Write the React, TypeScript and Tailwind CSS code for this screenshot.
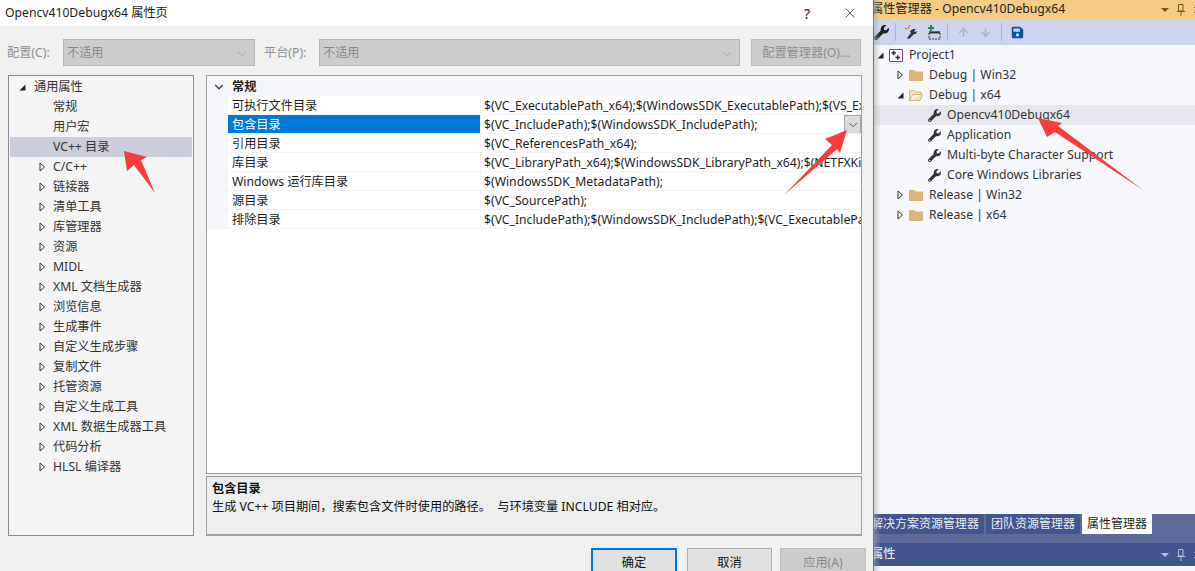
import { FaWrench, FaSave } from 'react-icons/fa';
import { ArrowUp, ArrowDown, ChevronDown, X } from 'lucide-react';

const FONT = 'font-["Noto_Sans","Noto_Sans_CJK_SC",sans-serif]';

const NAV = [
  { label: '常规', indent: true },
  { label: '用户宏', indent: true },
  { label: 'VC++ 目录', indent: true, selected: true },
  { label: 'C/C++' },
  { label: '链接器' },
  { label: '清单工具' },
  { label: '库管理器' },
  { label: '资源' },
  { label: 'MIDL' },
  { label: 'XML 文档生成器' },
  { label: '浏览信息' },
  { label: '生成事件' },
  { label: '自定义生成步骤' },
  { label: '复制文件' },
  { label: '托管资源' },
  { label: '自定义生成工具' },
  { label: 'XML 数据生成器工具' },
  { label: '代码分析' },
  { label: 'HLSL 编译器' },
];

const ROWS = [
  { name: '可执行文件目录', value: '$(VC_ExecutablePath_x64);$(WindowsSDK_ExecutablePath);$(VS_ExecutablePath);' },
  { name: '包含目录', value: '$(VC_IncludePath);$(WindowsSDK_IncludePath);', active: true },
  { name: '引用目录', value: '$(VC_ReferencesPath_x64);' },
  { name: '库目录', value: '$(VC_LibraryPath_x64);$(WindowsSDK_LibraryPath_x64);$(NETFXKitsDir)Lib\\um\\x64' },
  { name: 'Windows 运行库目录', value: '$(WindowsSDK_MetadataPath);' },
  { name: '源目录', value: '$(VC_SourcePath);' },
  { name: '排除目录', value: '$(VC_IncludePath);$(WindowsSDK_IncludePath);$(VC_ExecutablePath_x64);$(VC_LibraryPath_x64)' },
];

function Collapsed() {
  return (
    <svg width="7" height="10" viewBox="0 0 7 10" className="shrink-0">
      <path d="M1 1 L5.5 5 L1 9 Z" fill="#fff" stroke="#333" strokeWidth="1" />
    </svg>
  );
}

function Expanded() {
  return (
    <svg width="7" height="7" viewBox="0 0 7 7" className="shrink-0">
      <path d="M6.5 0.5 V6.5 H0.5 Z" fill="#222" />
    </svg>
  );
}

function Folder({ open }: { open?: boolean }) {
  if (open) {
    return (
      <svg width="14" height="12" viewBox="0 0 14 12" className="shrink-0">
        <path d="M0.5 11.5 V1.5 H5 L6.5 3 H12 V5.5 H4 L0.5 11.5 H11 L13.5 5.5 H12" fill="#f1e3c9" stroke="#dcb67a" strokeWidth="1" />
      </svg>
    );
  }
  return (
    <svg width="14" height="12" viewBox="0 0 14 12" className="shrink-0">
      <path d="M0 1 H5.5 L7 2.5 H14 V12 H0 Z" fill="#dcb67a" />
    </svg>
  );
}

function PaneButtons({ color }: { color: string }) {
  return (
    <div className="-mr-[6px] flex shrink-0 items-center gap-[8px]">
      <svg width="8" height="4" viewBox="0 0 8 4"><path d="M0 0 H8 L4 4 Z" fill={color} /></svg>
      <svg width="8" height="12" viewBox="0 0 8 12"><path d="M1.5 .5 H6 V7 H1.5 Z M0 7.5 H8 M4 8 V12" fill="none" stroke={color} /></svg>
      <svg width="8" height="8" viewBox="0 0 8 8"><path d="M1 1 L7 7 M7 1 L1 7" stroke={color} /></svg>
    </div>
  );
}

function ConfigSelect({ width }: { width: string }) {
  return (
    <div className={`flex h-[27px] items-center justify-between border border-[#b5b5b5] bg-[#cccccc] pl-[3px] pr-[5px] pt-[2px] text-[#8a8a8a] ${width}`}>
      <span>不适用</span>
      <ChevronDown size={14} strokeWidth={1.2} className="text-[#9a9a9a]" />
    </div>
  );
}

function Dialog() {
  return (
    <div className="flex h-full w-[873px] shrink-0 flex-col bg-[#f0f0f0]">
      <div className="flex h-[26px] shrink-0 items-center justify-between bg-white pl-[5px] pr-[15px] text-[#1a1a1a]">
        <span>Opencv410Debugx64 属性页</span>
        <div className="flex items-center gap-[32px]">
          <span className="text-[14px]">?</span>
          <X size={16} strokeWidth={1.1} />
        </div>
      </div>

      <div className="flex h-[49px] shrink-0 items-center pl-[7px] pr-[12px] pt-[4px] text-[#8f8f8f]">
        <span className="w-[56px] pt-[2px]">配置(C):</span>
        <ConfigSelect width="w-[192px]" />
        <span className="ml-[9px] w-[55px] pt-[2px]">平台(P):</span>
        <ConfigSelect width="w-[421px]" />
        <div className="ml-[11px] flex h-[27px] flex-1 items-center justify-center border border-[#bdbdbd] bg-[#cccccc] pt-[2px]">
          配置管理器(O)...
        </div>
      </div>

      <div className="flex h-[461px] shrink-0 gap-[12px] pl-[8px] pr-[11px]">
        <div className="flex w-[186px] shrink-0 flex-col border border-[#8a8a94] bg-[#f5f5f5] px-px pt-px text-[#333]">
          <div className="flex h-[20px] items-center gap-[6px] pl-[9px]">
            <Expanded />
            <span className="ml-[2px]">通用属性</span>
          </div>
          {NAV.map((n) => (
            <div
              key={n.label}
              className={`flex h-[20px] shrink-0 items-center pl-[29px] ${n.selected ? 'bg-[#cbcdda]' : ''}`}
            >
              {n.indent ? <span className="w-[7px]" /> : <Collapsed />}
              <span className="ml-[7px]">{n.label}</span>
            </div>
          ))}
        </div>

        <div className="flex min-w-0 flex-1 flex-col gap-[2px]">
          <div className="flex h-[399px] shrink-0 flex-col border border-[#a0a0a0] bg-white text-[#1e1e1e]">
            <div className="flex h-[20px] shrink-0 items-center bg-[#f5f6fa] pl-[5px] pt-[2px]">
              <ChevronDown size={14} strokeWidth={2.2} className="text-[#444]" />
              <span className="ml-[6px] font-bold">常规</span>
            </div>
            {ROWS.map((r) => (
              <div key={r.name} className="flex h-[19px] shrink-0">
                <div className="w-[21px] shrink-0 bg-[#f5f6fa]" />
                <div className={`w-[252px] shrink-0 border-b border-[#f4f4f6] pl-[4px] leading-[20px] ${r.active ? 'bg-[#0078d7] text-white' : ''}`}>
                  {r.name}
                </div>
                <div className="relative min-w-0 flex-1 overflow-hidden whitespace-nowrap border-b border-l border-[#f4f4f6] pl-[3px] leading-[20px]">
                  {r.value}
                  {r.active && (
                    <div className="absolute right-0 top-0 flex h-[19px] w-[17px] items-center justify-center border border-[#a8a8a8] bg-[#dcdcdc]">
                      <ChevronDown size={14} strokeWidth={1.4} className="text-[#444]" />
                    </div>
                  )}
                </div>
              </div>
            ))}
          </div>
          <div className="flex h-[60px] shrink-0 flex-col border border-b-2 border-[#a0a0a0] bg-[#eeeeee] pl-[5px] pt-[3px] leading-[18px] text-[#111]">
            <span className="font-bold">包含目录</span>
            <span className="whitespace-pre">生成 VC++ 项目期间，搜索包含文件时使用的路径。  与环境变量 INCLUDE 相对应。</span>
          </div>
        </div>
      </div>

      <div className="flex flex-1 items-start pl-[591px] pt-[12px]">
        <div className="flex h-[30px] w-[86px] shrink-0 items-center justify-center border-2 border-[#0078d7] bg-[#e1e1e1] text-[#111]">确定</div>
        <div className="ml-[10px] flex h-[30px] w-[85px] shrink-0 items-center justify-center border border-[#adadad] bg-[#e1e1e1] text-[#111]">取消</div>
        <div className="ml-[8px] flex h-[30px] w-[86px] shrink-0 items-center justify-center border border-[#bfbfbf] bg-[#cccccc] text-[#8a8a8a]">应用(A)</div>
      </div>
    </div>
  );
}

function ToolSep({ className }: { className: string }) {
  return <div className={`h-[18px] w-px shrink-0 bg-[#a9b5d0] ${className}`} />;
}

function TreeRow({ depth, toggle, icon, label, active }: {
  depth: number;
  toggle?: 'open' | 'closed';
  icon: React.ReactNode;
  label: string;
  active?: boolean;
}) {
  return (
    <div className={`flex h-[20px] items-center ${active ? 'bg-[#e6e7ef]' : ''}`}>
      <div className={`flex items-center ${depth === 0 ? 'ml-[3px]' : depth === 1 ? 'ml-[23px]' : 'ml-[51px]'}`}>
        {toggle && <span className="flex w-[10px]">{toggle === 'open' ? <Expanded /> : <Collapsed />}</span>}
        <span className="mx-[2px] flex w-[14px] justify-center">{icon}</span>
      </div>
      <span className="ml-[4px] whitespace-nowrap">{label}</span>
    </div>
  );
}

function PropertyManager() {
  const wrench = <FaWrench size={13} className="text-[#333]" />;
  return (
    <div className="relative flex h-full min-w-0 flex-1 flex-col overflow-hidden border-l border-[#3a9a5c] bg-[#f6f8fc] text-[#333]">
      <div className="flex h-[19px] shrink-0 items-center justify-between bg-[#f5cc84] text-[#1e1e1e]">
        <span className="-ml-[3px] whitespace-nowrap">属性管理器 - Opencv410Debugx64</span>
        <PaneButtons color="#7a5510" />
      </div>

      <div className="flex h-[26px] shrink-0 items-center bg-[#ccd5f0]">
        <FaWrench size={15} className="shrink-0 text-[#222]" />
        <ToolSep className="ml-[6px]" />
        <svg width="14" height="16" viewBox="0 0 14 16" className="ml-[8px] shrink-0">
          <path d="M4 3 L5 5 M1 4 L3 5 M6 1 L5 3" stroke="#c27d1a" strokeWidth="1.2" />
          <path d="M3 14 L7 9 L6 7 L9 5 L12 5 L10 7 L11 8 L13 7 L12 10 L10 10 L5 15 Z" fill="#333" />
        </svg>
        <svg width="14" height="16" viewBox="0 0 14 16" className="ml-[9px] shrink-0">
          <path d="M4 1 V7 M1 4 H7" stroke="#2c8a3c" strokeWidth="2" />
          <path d="M2 8 H13 V15 H2 Z" fill="none" stroke="#333" strokeDasharray="2 1" />
          <path d="M2 8.5 H13" stroke="#333" strokeWidth="2" />
        </svg>
        <ToolSep className="ml-[6px]" />
        <ArrowUp size={13} strokeWidth={2.5} className="ml-[9px] shrink-0 text-[#a9b3c9]" />
        <ArrowDown size={13} strokeWidth={2.5} className="ml-[9px] shrink-0 text-[#a9b3c9]" />
        <ToolSep className="ml-[9px]" />
        <FaSave size={13} className="ml-[9px] shrink-0 text-[#00539c]" />
      </div>

      <div className="flex min-h-0 flex-1 flex-col">
        <TreeRow
          depth={0}
          toggle="open"
          label="Project1"
          icon={
            <svg width="14" height="13" viewBox="0 0 14 13">
              <path d="M.5.5 H13.5 V12.5 H.5 Z" fill="#fff" stroke="#8a3f9d" />
              <path d="M2.5 4 H7 M4.7 1.8 V6.2 M6.5 8.5 H11 M8.7 6.3 V10.7" stroke="#333" strokeWidth="1.6" />
            </svg>
          }
        />
        <TreeRow depth={1} toggle="closed" label="Debug | Win32" icon={<Folder />} />
        <TreeRow depth={1} toggle="open" label="Debug | x64" icon={<Folder open />} />
        <TreeRow depth={2} label="Opencv410Debugx64" icon={wrench} active />
        <TreeRow depth={2} label="Application" icon={wrench} />
        <TreeRow depth={2} label="Multi-byte Character Support" icon={wrench} />
        <TreeRow depth={2} label="Core Windows Libraries" icon={wrench} />
        <TreeRow depth={1} toggle="closed" label="Release | Win32" icon={<Folder />} />
        <TreeRow depth={1} toggle="closed" label="Release | x64" icon={<Folder />} />
      </div>

      <div className="flex h-[29px] shrink-0 items-start bg-[#5d6b99] text-[12px] text-[#e8ecf5]">
        <div className="flex h-[20px] w-[110px] shrink-0 items-center justify-end whitespace-nowrap bg-[#40568d] pr-[5px]">解决方案资源管理器</div>
        <div className="ml-[2px] flex h-[20px] w-[94px] shrink-0 items-center justify-center whitespace-nowrap bg-[#40568d]">团队资源管理器</div>
        <div className="ml-[2px] flex h-[20px] w-[70px] shrink-0 items-center justify-center whitespace-nowrap bg-white text-[#1e1e1e]">属性管理器</div>
      </div>
      <div className="flex h-[23px] shrink-0 items-center justify-between bg-[#40568d] text-white">
        <span className="-ml-[3px]">属性</span>
        <PaneButtons color="#b5c0dc" />
      </div>
      <div className="h-[5px] shrink-0" />
      <div className="pointer-events-none absolute inset-y-0 left-0 w-[7px] bg-gradient-to-r from-[#a8a8a8]/50 to-transparent" />
    </div>
  );
}

export default function App() {
  return (
    <div className={`relative flex h-[571px] w-[1195px] overflow-hidden bg-white text-[12.2px] ${FONT}`}>
      <Dialog />
      <PropertyManager />
      <svg className="pointer-events-none absolute inset-0" width="1195" height="571" viewBox="0 0 1195 571">
        <g fill="#fb3c3c">
          <polygon points="124,151 127,171 134,165 155,193 141,160 147,157" />
          <polygon points="847,130 825,139 832,145 784,195 837,149 840,153" />
          <polygon points="1038,118 1047,137 1055,132 1143,190 1058,126 1062,123" />
        </g>
      </svg>
    </div>
  );
}
